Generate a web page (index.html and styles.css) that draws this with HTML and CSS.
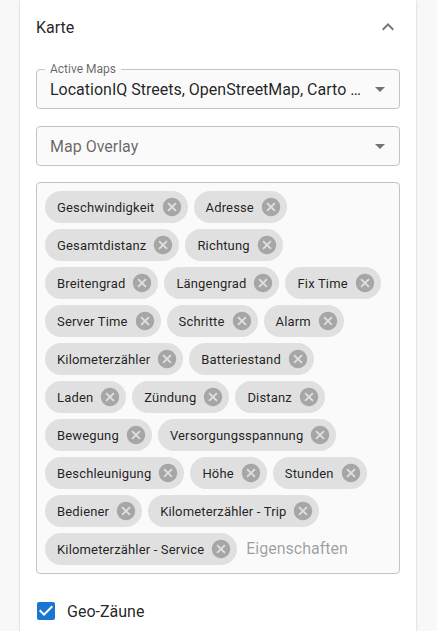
FILE: index.html
```html
<!DOCTYPE html>
<html lang="de">
<head>
    <meta charset="UTF-8">
    <meta name="viewport" content="width=device-width, initial-scale=1.0">
    <title>Karte</title>
    <link rel="stylesheet" href="styles.css">
</head>
<body>

    <div class="card">
        <div class="card-head">
            <span class="card-title">Karte</span>
            <svg class="chevron" viewBox="0 0 24 24"><path d="M16.59 15.41 12 10.83l-4.59 4.58L6 14l6-6 6 6z"/></svg>
        </div>

        <fieldset class="select">
            <legend>Active Maps</legend>
            <div class="select-row">
                <span class="select-value">LocationIQ Streets, OpenStreetMap, Carto …</span>
                <svg class="arrow" viewBox="0 0 24 24"><path d="M7 10l5 5 5-5z"/></svg>
            </div>
        </fieldset>

        <div class="select select-empty">
            <span class="select-placeholder">Map Overlay</span>
            <svg class="arrow" viewBox="0 0 24 24"><path d="M7 10l5 5 5-5z"/></svg>
        </div>

        <div class="chips" id="chips">
            <span class="chips-input">Eigenschaften</span>
        </div>

        <label class="check-row">
            <svg class="check" viewBox="0 0 24 24"><path d="M19 3H5c-1.11 0-2 .9-2 2v14c0 1.1.89 2 2 2h14c1.11 0 2-.9 2-2V5c0-1.1-.89-2-2-2zm-9 14l-5-5 1.41-1.41L10 14.17l7.59-7.59L19 8l-9 9z"/></svg>
            <span>Geo-Zäune</span>
        </label>
    </div>

    <script>
        const attributes = [
            "Geschwindigkeit", "Adresse", "Gesamtdistanz", "Richtung", "Breitengrad",
            "Längengrad", "Fix Time", "Server Time", "Schritte", "Alarm",
            "Kilometerzähler", "Batteriestand", "Laden", "Zündung", "Distanz",
            "Bewegung", "Versorgungsspannung", "Beschleunigung", "Höhe", "Stunden",
            "Bediener", "Kilometerzähler - Trip", "Kilometerzähler - Service"
        ];

        const box = document.getElementById("chips");
        const input = box.querySelector(".chips-input");

        // Chips vor dem Eingabefeld einfügen
        attributes.forEach(name => {
            const chip = document.createElement("span");
            chip.className = "chip";
            chip.innerHTML = `<span class="chip-label">${name}</span>` +
                '<svg class="chip-delete" viewBox="0 0 24 24"><path d="M12 2C6.47 2 2 6.47 2 12s4.47 10 10 10 10-4.47 10-10S17.53 2 12 2zm5 13.59L15.59 17 12 13.41 8.41 17 7 15.59 10.59 12 7 8.41 8.41 7 12 10.59 15.59 7 17 8.41 13.41 12 17 15.59z"/></svg>';
            box.insertBefore(chip, input);
        });
    </script>

</body>
</html>
```

FILE: styles.css
```css
body {
    font-family: Roboto, "Liberation Sans", Arial, sans-serif;
    background: #f8f8f8;
    color: rgba(0, 0, 0, 0.87);
    margin: 0;
    padding: 0 0 0 20px;
}
.card {
    width: 396px;
    box-sizing: border-box;
    background: #fff;
    padding: 0 16px 24px;
    box-shadow: 0 2px 1px -1px rgba(0, 0, 0, 0.2), 0 1px 1px 0 rgba(0, 0, 0, 0.14), 0 1px 3px 0 rgba(0, 0, 0, 0.12);
}
.card-head {
    height: 54px;
    display: flex;
    align-items: center;
    justify-content: space-between;
}
.card-title {
    font-size: 16px;
}
.chevron {
    width: 24px;
    height: 24px;
    fill: rgba(0, 0, 0, 0.54);
    margin-top: -1px;
}
.select {
    margin: 8px 0 0;
    padding: 1px 7px 7px 13px;
    border: 1px solid #c4c4c4;
    border-radius: 4px;
    background: #fafafa;
    min-width: 0;
}
.select legend {
    font-size: 12px;
    line-height: 14px;
    color: rgba(0, 0, 0, 0.6);
    padding: 0 5px;
    margin-left: -5px;
}
.select-row {
    display: flex;
    align-items: center;
    height: 24px;
}
.select-value {
    flex: 1;
    font-size: 16px;
    white-space: nowrap;
    overflow: hidden;
}
.arrow {
    width: 24px;
    height: 24px;
    fill: rgba(0, 0, 0, 0.54);
}
.select-empty {
    margin-top: 17px;
    height: 40px;
    box-sizing: border-box;
    display: flex;
    align-items: center;
    padding: 0 7px 0 13px;
}
.select-placeholder {
    flex: 1;
    font-size: 16px;
    color: rgba(0, 0, 0, 0.6);
}
.chips {
    margin-top: 16px;
    display: flex;
    flex-wrap: wrap;
    align-items: center;
    padding: 5px;
    border: 1px solid #c4c4c4;
    border-radius: 4px;
    background: #fafafa;
}
.chip {
    display: inline-flex;
    align-items: center;
    height: 32px;
    margin: 3px;
    border-radius: 16px;
    background: #e0e0e0;
    font-size: 13px;
    letter-spacing: 0.16px;
    white-space: nowrap;
}
.chip-label {
    padding: 0 12px;
}
.chip-delete {
    width: 22px;
    height: 22px;
    margin: 0 5px 0 -6px;
    fill: rgba(0, 0, 0, 0.26);
}
.chips-input {
    flex: 1;
    font-size: 16px;
    line-height: 24px;
    padding: 4px 4px 4px 6px;
    color: rgba(0, 0, 0, 0.38);
}
.check-row {
    display: flex;
    align-items: center;
    gap: 9px;
    height: 42px;
    margin-top: 16px;
    font-size: 16px;
}
.check {
    width: 24px;
    height: 24px;
    fill: #1976d2;
    margin-left: -2px;
}
```
